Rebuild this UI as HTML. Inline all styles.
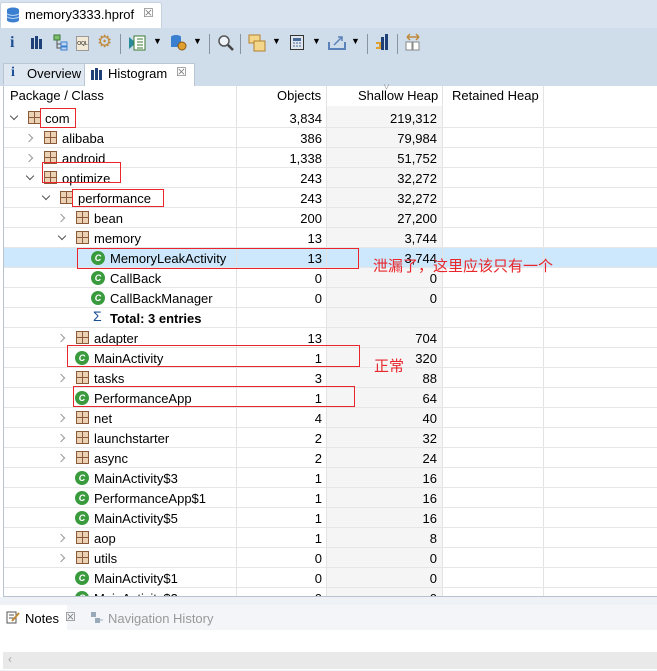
<!DOCTYPE html>
<html><head><meta charset="utf-8">
<style>
*{margin:0;padding:0;box-sizing:border-box}
body{width:657px;height:671px;overflow:hidden;background:#fff;font-family:"Liberation Sans","Noto Sans CJK SC",sans-serif;font-size:13px;color:#000;position:relative}
.a{position:absolute}
.row{position:absolute;left:4px;width:653px;height:20px;border-bottom:1px solid #e6e6e6}
.row span{position:absolute;top:3px;white-space:nowrap}
.n1{right:335px;text-align:right}
.n2{right:220px;text-align:right}
.pk{position:absolute;top:3px;width:13px;height:13px;background:#ecd2b4;border:1px solid #8a5a3a}
.pk:before{content:"";position:absolute;left:5px;top:-1px;width:1px;height:13px;background:#8a5a3a}
.pk:after{content:"";position:absolute;top:5px;left:-1px;width:13px;height:1px;background:#8a5a3a}
.cl{position:absolute;top:3px;width:14px;height:14px;border-radius:50%;background:#3a9a3e;color:#fff;font-size:9px;font-weight:bold;text-align:center;line-height:14px}
.ex,.co{position:absolute;width:6px;height:6px;border-right:1.5px solid #555;border-bottom:1.5px solid #555}
.ex{top:5px;transform:rotate(45deg)}
.co{top:7px;transform:rotate(-45deg);border-color:#999}
.rb{position:absolute;border:1px solid #e8262c}
.vl{position:absolute;top:86px;height:510px;width:1px;background:#e3e3e3}
</style></head><body>
<div class="a" style="left:0;top:0;width:657px;height:28px;background:#d9e3ef"></div>
<div class="a" style="left:0;top:2px;width:162px;height:27px;background:#fff;border:1px solid #c6d2e0;border-bottom:none;border-radius:3px 3px 0 0"></div>
<svg class="a" style="left:6px;top:7px" width="14" height="16"><ellipse cx="7" cy="3" rx="6" ry="2.5" fill="#3b7fd0"/><rect x="1" y="3" width="12" height="10" fill="#3b7fd0"/><ellipse cx="7" cy="13" rx="6" ry="2.5" fill="#3b7fd0"/><path d="M1 7q6 3 12 0M1 10q6 3 12 0" stroke="#bcd6f2" fill="none"/></svg>
<div class="a" style="left:25px;top:7px;font-size:13px">memory3333.hprof</div>
<div class="a" style="left:143px;top:6px;color:#777;font-size:12px">☒</div>
<div class="a" style="left:0;top:28px;width:657px;height:34px;background:#cfdcea"></div>
<div class="a" style="left:10px;top:34px;color:#1d4f93;font-weight:bold;font-size:16px;font-family:'Liberation Serif',serif">i</div>
<svg class="a" style="left:30px;top:36px" width="14" height="13"><rect x="1" y="2" width="3" height="11" fill="#1f3f78"/><rect x="5" y="0" width="3" height="13" fill="#1f3f78"/><rect x="9" y="3" width="3" height="10" fill="#1f3f78"/></svg>
<svg class="a" style="left:53px;top:34px" width="16" height="17"><rect x="1" y="1" width="6" height="5" fill="#7fbf6f" stroke="#3a7a30"/><rect x="8" y="8" width="6" height="4" fill="#bcd6f2" stroke="#3b7fd0"/><rect x="8" y="13" width="6" height="3" fill="#bcd6f2" stroke="#3b7fd0"/><path d="M4 6v8h4M4 10h4" stroke="#555" fill="none"/></svg>
<div class="a" style="left:76px;top:36px;width:13px;height:15px;background:#f2ead6;border:1px solid #999;font-size:5px;padding-top:4px;text-align:center">OQL</div>
<div class="a" style="left:97px;top:32px;color:#c08a3a;font-size:17px">⚙</div>
<div class="a" style="left:120px;top:34px;width:1px;height:20px;background:#8a94a0"></div>
<svg class="a" style="left:128px;top:35px" width="18" height="16"><path d="M1 2l7 6-7 6z" fill="#2a8a9a"/><rect x="6" y="1" width="11" height="14" fill="#fff" stroke="#3a7a30"/><path d="M9 4h6M9 7h6M9 10h6M9 13h6" stroke="#3a7a30"/></svg>
<div class="a" style="left:153px;top:36px;font-size:9px">▼</div>
<svg class="a" style="left:170px;top:34px" width="18" height="18"><ellipse cx="6" cy="3" rx="5" ry="2" fill="#3b7fd0"/><rect x="1" y="3" width="10" height="10" fill="#3b7fd0"/><circle cx="12" cy="12" r="4" fill="#e0a030" stroke="#8a5a10"/></svg>
<div class="a" style="left:193px;top:36px;font-size:9px">▼</div>
<div class="a" style="left:209px;top:34px;width:1px;height:20px;background:#8a94a0"></div>
<svg class="a" style="left:217px;top:34px" width="17" height="17"><circle cx="7" cy="7" r="5" fill="#eef4fa" stroke="#555" stroke-width="1.5"/><path d="M11 11l5 5" stroke="#444" stroke-width="2.5"/></svg>
<div class="a" style="left:240px;top:34px;width:1px;height:20px;background:#8a94a0"></div>
<svg class="a" style="left:248px;top:34px" width="18" height="18"><rect x="1" y="1" width="11" height="8" fill="#f4d68a" stroke="#b08030"/><rect x="6" y="7" width="11" height="10" fill="#f4d68a" stroke="#b08030"/></svg>
<div class="a" style="left:272px;top:36px;font-size:9px">▼</div>
<svg class="a" style="left:290px;top:35px" width="14" height="15"><rect x="0.5" y="0.5" width="13" height="14" fill="#dfe6ee" stroke="#333"/><rect x="3" y="3" width="8" height="3" fill="#4a6a9a"/><path d="M3 8h2M6 8h2M9 8h2M3 11h2M6 11h2M9 11h2" stroke="#4a6a9a"/></svg>
<div class="a" style="left:312px;top:36px;font-size:9px">▼</div>
<svg class="a" style="left:328px;top:34px" width="18" height="16"><path d="M1 8v7h16V8" stroke="#5a82b8" fill="none" stroke-width="2"/><path d="M6 11l8-8M10 3h4v4" stroke="#5a82b8" fill="none" stroke-width="1.5"/></svg>
<div class="a" style="left:351px;top:36px;font-size:9px">▼</div>
<div class="a" style="left:367px;top:34px;width:1px;height:20px;background:#8a94a0"></div>
<svg class="a" style="left:374px;top:34px" width="16" height="17"><rect x="7" y="3" width="3" height="13" fill="#1f3f78"/><rect x="11" y="0" width="3" height="16" fill="#1f3f78"/><path d="M2 9h4v5H2" stroke="#e0a030" stroke-width="2" fill="none"/></svg>
<div class="a" style="left:397px;top:34px;width:1px;height:20px;background:#8a94a0"></div>
<svg class="a" style="left:405px;top:33px" width="16" height="18"><path d="M2 4h12M2 4l3-3M2 4l3 3M14 4l-3-3M14 4l-3 3" stroke="#c08a3a" fill="none" stroke-width="1.5"/><rect x="1" y="9" width="6" height="8" fill="#fff" stroke="#888"/><rect x="8" y="9" width="6" height="8" fill="#fff" stroke="#888"/></svg>
<div class="a" style="left:0;top:62px;width:657px;height:24px;background:#cfdcea"></div>
<div class="a" style="left:3px;top:63px;width:82px;height:22px;background:#dfe7f1;border:1px solid #b9c6d6;border-bottom:none"></div>
<div class="a" style="left:84px;top:63px;width:111px;height:23px;background:#fff;border:1px solid #b9c6d6;border-bottom:none"></div>
<div class="a" style="left:11px;top:65px;color:#1d4f93;font-weight:bold;font-family:'Liberation Serif',serif;font-size:14px">i</div>
<div class="a" style="left:27px;top:66px">Overview</div>
<svg class="a" style="left:91px;top:68px" width="11" height="12"><rect x="0" y="2" width="3" height="10" fill="#1f3f78"/><rect x="4" y="0" width="3" height="12" fill="#1f3f78"/><rect x="8" y="2" width="3" height="10" fill="#1f3f78"/></svg>
<div class="a" style="left:108px;top:66px">Histogram</div>
<div class="a" style="left:176px;top:65px;color:#777;font-size:12px">☒</div>
<div class="a" style="left:3px;top:86px;width:654px;height:511px;background:#fff;border-left:1px solid #b9c3cf;border-bottom:1px solid #b9c3cf"></div>
<div class="a" style="left:327px;top:106px;width:115px;height:490px;background:#f5f5f5"></div>
<div class="a" style="left:4px;top:248px;width:653px;height:20px;background:#cde8fc"></div>
<div class="a" style="left:10px;top:88px">Package / Class</div>
<div class="a" style="left:277px;top:88px">Objects</div>
<div class="a" style="left:358px;top:88px">Shallow Heap</div>
<div class="a" style="left:383px;top:82px;font-size:7px;color:#888">∨</div>
<div class="a" style="left:452px;top:88px">Retained Heap</div>
<div class="vl" style="left:236px"></div><div class="vl" style="left:326px"></div><div class="vl" style="left:442px"></div><div class="vl" style="left:543px"></div>

<div class="row" style="top:108px"><i class="ex" style="left:7px"></i><i class="pk" style="left:24px"></i><span style="left:41px">com</span><span class="n1">3,834</span><span class="n2">219,312</span></div>
<div class="row" style="top:128px"><i class="co" style="left:22px"></i><i class="pk" style="left:40px"></i><span style="left:58px">alibaba</span><span class="n1">386</span><span class="n2">79,984</span></div>
<div class="row" style="top:148px"><i class="co" style="left:22px"></i><i class="pk" style="left:40px"></i><span style="left:58px">android</span><span class="n1">1,338</span><span class="n2">51,752</span></div>
<div class="row" style="top:168px"><i class="ex" style="left:23px"></i><i class="pk" style="left:40px"></i><span style="left:58px">optimize</span><span class="n1">243</span><span class="n2">32,272</span></div>
<div class="row" style="top:188px"><i class="ex" style="left:39px"></i><i class="pk" style="left:56px"></i><span style="left:74px">performance</span><span class="n1">243</span><span class="n2">32,272</span></div>
<div class="row" style="top:208px"><i class="co" style="left:54px"></i><i class="pk" style="left:72px"></i><span style="left:90px">bean</span><span class="n1">200</span><span class="n2">27,200</span></div>
<div class="row" style="top:228px"><i class="ex" style="left:55px"></i><i class="pk" style="left:72px"></i><span style="left:90px">memory</span><span class="n1">13</span><span class="n2">3,744</span></div>
<div class="row" style="top:248px"><i class="cl" style="left:87px">C</i><span style="left:106px">MemoryLeakActivity</span><span class="n1">13</span><span class="n2">3,744</span></div>
<div class="row" style="top:268px"><i class="cl" style="left:87px">C</i><span style="left:106px">CallBack</span><span class="n1">0</span><span class="n2">0</span></div>
<div class="row" style="top:288px"><i class="cl" style="left:87px">C</i><span style="left:106px">CallBackManager</span><span class="n1">0</span><span class="n2">0</span></div>
<div class="row" style="top:308px"><span style="left:89px;top:0;color:#1d4f93;font-size:14px">Σ</span><span style="left:106px;font-weight:bold">Total: 3 entries</span></div>
<div class="row" style="top:328px"><i class="co" style="left:54px"></i><i class="pk" style="left:72px"></i><span style="left:90px">adapter</span><span class="n1">13</span><span class="n2">704</span></div>
<div class="row" style="top:348px"><i class="cl" style="left:71px">C</i><span style="left:90px">MainActivity</span><span class="n1">1</span><span class="n2">320</span></div>
<div class="row" style="top:368px"><i class="co" style="left:54px"></i><i class="pk" style="left:72px"></i><span style="left:90px">tasks</span><span class="n1">3</span><span class="n2">88</span></div>
<div class="row" style="top:388px"><i class="cl" style="left:71px">C</i><span style="left:90px">PerformanceApp</span><span class="n1">1</span><span class="n2">64</span></div>
<div class="row" style="top:408px"><i class="co" style="left:54px"></i><i class="pk" style="left:72px"></i><span style="left:90px">net</span><span class="n1">4</span><span class="n2">40</span></div>
<div class="row" style="top:428px"><i class="co" style="left:54px"></i><i class="pk" style="left:72px"></i><span style="left:90px">launchstarter</span><span class="n1">2</span><span class="n2">32</span></div>
<div class="row" style="top:448px"><i class="co" style="left:54px"></i><i class="pk" style="left:72px"></i><span style="left:90px">async</span><span class="n1">2</span><span class="n2">24</span></div>
<div class="row" style="top:468px"><i class="cl" style="left:71px">C</i><span style="left:90px">MainActivity$3</span><span class="n1">1</span><span class="n2">16</span></div>
<div class="row" style="top:488px"><i class="cl" style="left:71px">C</i><span style="left:90px">PerformanceApp$1</span><span class="n1">1</span><span class="n2">16</span></div>
<div class="row" style="top:508px"><i class="cl" style="left:71px">C</i><span style="left:90px">MainActivity$5</span><span class="n1">1</span><span class="n2">16</span></div>
<div class="row" style="top:528px"><i class="co" style="left:54px"></i><i class="pk" style="left:72px"></i><span style="left:90px">aop</span><span class="n1">1</span><span class="n2">8</span></div>
<div class="row" style="top:548px"><i class="co" style="left:54px"></i><i class="pk" style="left:72px"></i><span style="left:90px">utils</span><span class="n1">0</span><span class="n2">0</span></div>
<div class="row" style="top:568px"><i class="cl" style="left:71px">C</i><span style="left:90px">MainActivity$1</span><span class="n1">0</span><span class="n2">0</span></div>
<div class="a" style="left:4px;top:588px;width:653px;height:8px;overflow:hidden"><div class="row" style="left:0;top:0;border:none"><i class="cl" style="left:71px">C</i><span style="left:90px">MainActivity$3</span><span class="n1">0</span><span class="n2">0</span></div></div>

<div class="rb" style="left:40px;top:108px;width:36px;height:20px"></div>
<div class="rb" style="left:42px;top:162px;width:79px;height:21px"></div>
<div class="rb" style="left:72px;top:189px;width:92px;height:18px"></div>
<div class="rb" style="left:77px;top:248px;width:282px;height:21px"></div>
<div class="rb" style="left:67px;top:345px;width:293px;height:22px"></div>
<div class="rb" style="left:73px;top:386px;width:282px;height:21px"></div>
<div class="a" style="left:373px;top:255px;color:#e8262c;font-size:15px">泄漏了，这里应该只有一个</div>
<div class="a" style="left:374px;top:355px;color:#e8262c;font-size:15px">正常</div>

<div class="a" style="left:0;top:597px;width:657px;height:74px;background:#eef2f7"></div>
<div class="a" style="left:0;top:605px;width:67px;height:25px;background:#fff"></div>
<div class="a" style="left:67px;top:605px;width:590px;height:25px;background:#f3f5f9"></div>
<div class="a" style="left:0;top:630px;width:657px;height:40px;background:#fff"></div>
<svg class="a" style="left:6px;top:610px" width="14" height="14"><rect x="1" y="2" width="9" height="11" fill="#fff" stroke="#555"/><path d="M3 5h5M3 8h5" stroke="#555"/><path d="M6 11l7-8" stroke="#c08a3a" stroke-width="2"/></svg>
<div class="a" style="left:25px;top:611px">Notes</div>
<div class="a" style="left:65px;top:610px;color:#777;font-size:12px">☒</div>
<svg class="a" style="left:91px;top:612px" width="12" height="12"><rect x="0" y="0" width="5" height="5" fill="#9ab"/><rect x="4" y="6" width="5" height="5" fill="#9ab"/><path d="M9 8h3" stroke="#9ab"/></svg>
<div class="a" style="left:108px;top:611px;color:#999">Navigation History</div>
<div class="a" style="left:3px;top:652px;width:654px;height:17px;background:#e9e9e9"></div>
<div class="a" style="left:8px;top:652px;color:#aaa;font-size:12px">‹</div>
</body></html>
